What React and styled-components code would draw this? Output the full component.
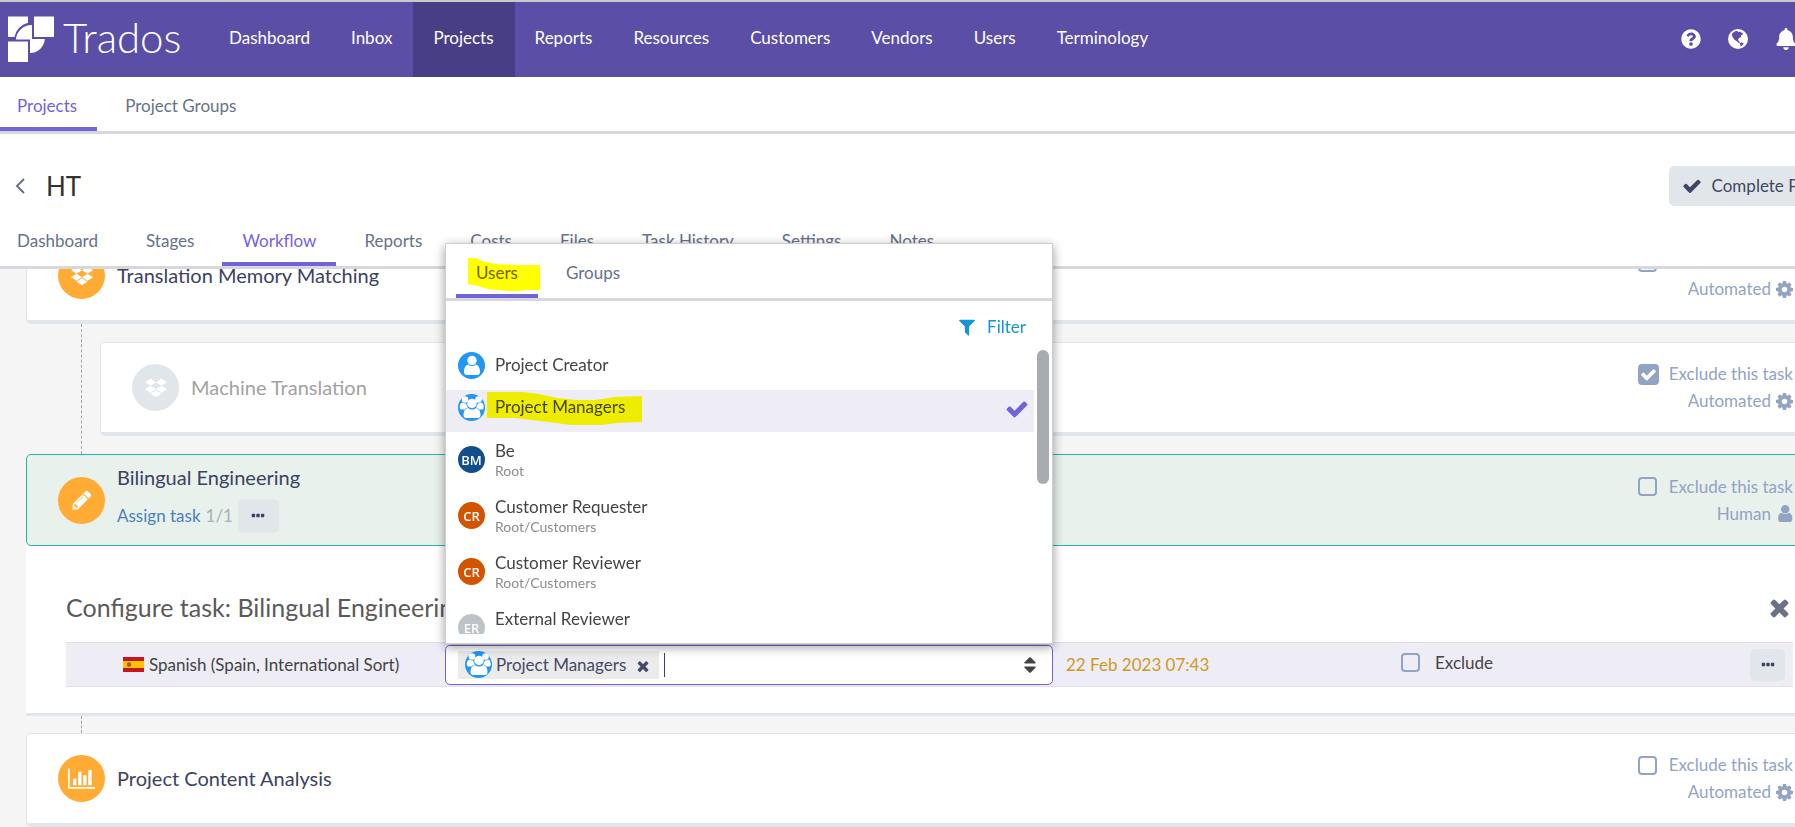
import React, { useState } from 'react';
import styled, { createGlobalStyle } from 'styled-components';
import { FaBell, FaDropbox, FaQuestionCircle } from 'react-icons/fa';

const GlobalStyle = createGlobalStyle`
    * {
        box-sizing: border-box;
    }

    body {
        margin: 0;
        background: #f5f5f5;
        color: #3c4260;
        font-family: Lato, Carlito, sans-serif;
        font-size: 17px;
        line-height: 24px;
    }

    h1, h2, h3, p, ul, ol {
        margin: 0;
        padding: 0;
        font-weight: 400;
        list-style: none;
    }

    a {
        color: inherit;
        text-decoration: none;
    }

    button, input {
        margin: 0;
        padding: 0;
        border: 0;
        background: none;
        color: inherit;
        font: inherit;
    }

    button {
        cursor: pointer;
    }
`;

const Page = styled.div`
    min-height: 100vh;
    overflow: hidden;
`;

/* the app is a little wider than the window and runs off its right edge */
const Wide = styled.div`
    width: calc(100% + 56px);
`;

const Glyph = styled.svg`
    display: block;
    flex: none;
    width: ${({ $size }) => $size}px;
    height: ${({ $size }) => $size}px;
    fill: currentColor;
`;

const paths = {
    check: 'M1671 566q0 40-28 68l-724 724-136 136q-28 28-68 28t-68-28l-136-136-362-362q-28-28-28-68t28-68l136-136q28-28 68-28t68 28l294 295 656-657q28-28 68-28t68 28l136 136q28 28 28 68z',
    times: 'M1490 1322q0 40-28 68l-136 136q-28 28-68 28t-68-28l-294-294-294 294q-28 28-68 28t-68-28l-136-136q-28-28-28-68t28-68l294-294-294-294q-28-28-28-68t28-68l136-136q28-28 68-28t68 28l294 294 294-294q28-28 68-28t68 28l136 136q28 28 28 68t-28 68l-294 294 294 294q28 28 28 68z',
    cog: 'M1152 896q0-106-75-181t-181-75-181 75-75 181 75 181 181 75 181-75 75-181zm512-109v222q0 12-8 23t-20 13l-185 28q-19 54-39 91 35 50 107 138 10 12 10 25t-9 23q-27 37-99 108t-94 71q-12 0-26-9l-138-108q-44 23-91 38-16 136-29 186-7 28-36 28h-222q-14 0-24.5-8.5t-11.5-21.5l-28-184q-49-16-90-37l-141 107q-10 9-25 9-14 0-25-11-126-114-165-168-7-10-7-23 0-12 8-23 15-21 51-66.5t54-70.5q-27-50-41-99l-183-27q-13-2-21-12.5t-8-23.5v-222q0-12 8-23t19-13l186-28q14-46 39-92-40-57-107-138-10-12-10-24 0-10 9-23 26-36 98.5-107.5t94.5-71.5q13 0 26 10l138 107q44-23 91-38 16-136 29-186 7-28 36-28h222q14 0 24.5 8.5t11.5 21.5l28 184q49 16 90 37l142-107q9-9 24-9 13 0 25 10 129 119 165 170 7 8 7 22 0 12-8 23-15 21-51 66.5t-54 70.5q26 50 41 98l183 28q13 2 21 12.5t8 23.5z',
    user: 'M1536 1399q0 109-62.5 187t-150.5 78h-854q-88 0-150.5-78t-62.5-187q0-85 8.5-160.5t31.5-152 58.5-131 94-89 134.5-34.5q131 128 313 128t313-128q76 0 134.5 34.5t94 89 58.5 131 31.5 152 8.5 160.5zm-256-887q0 159-112.5 271.5t-271.5 112.5-271.5-112.5-112.5-271.5 112.5-271.5 271.5-112.5 271.5 112.5 112.5 271.5z',
    pencil: 'M491 1536l91-91-235-235-91 91v107h128v128h107zm523-928q0-22-22-22-10 0-17 7l-542 542q-7 7-7 17 0 22 22 22 10 0 17-7l542-542q7-7 7-17zm-54-192l416 416-832 832h-416v-416zm683 96q0 53-37 90l-166 166-416-416 166-165q36-38 90-38 53 0 91 38l235 234q37 39 37 91z',
    filter: 'M1595 295q17 41-14 70l-493 493v742q0 42-39 59-13 5-25 5-27 0-45-19l-256-256q-19-19-19-45v-486l-493-493q-31-29-14-70 17-39 59-39h1280q42 0 59 39z',
    sort: 'M1408 1088q0 26-19 45l-448 448q-19 19-45 19t-45-19l-448-448q-19-19-19-45t19-45 45-19h896q26 0 45 19t19 45zm0-384q0 26-19 45t-45 19h-896q-26 0-45-19t-19-45 19-45l448-448q19-19 45-19t45 19l448 448q19 19 19 45z',
    dots: 'M576 736v192q0 40-28 68t-68 28h-192q-40 0-68-28t-28-68v-192q0-40 28-68t68-28h192q40 0 68 28t28 68zm512 0v192q0 40-28 68t-68 28h-192q-40 0-68-28t-28-68v-192q0-40 28-68t68-28h192q40 0 68 28t28 68zm512 0v192q0 40-28 68t-68 28h-192q-40 0-68-28t-28-68v-192q0-40 28-68t68-28h192q40 0 68 28t28 68z',
    chart: 'M640 896v512h-256v-512h256zm384-512v1024h-256v-1024h256zm1024 1152v128h-2048v-1536h128v1408h1920zm-640-896v768h-256v-768h256zm384-384v1152h-256v-1152h256z',
};

const viewBoxes = {
    chart: '0 0 2048 1792',
    cog: '128 128 1536 1536',
    user: '64 128 1536 1536',
};

const Icon = ({ name, size = 18 }) => (
    <Glyph viewBox={viewBoxes[name] || '0 0 1792 1792'} $size={size} aria-hidden="true">
        <path d={paths[name]} />
    </Glyph>
);

/* ---------- top bar ---------- */

const TopBar = styled(Wide)`
    display: flex;
    height: 77px;
    padding: 0 54px 0 8px;
    border-top: 2px solid #c9c9c9;
    background: #5a4ea6;
    color: #fff;
`;

const Brand = styled.a`
    display: flex;
    align-items: center;
    gap: 9px;
    width: 201px;
    padding-bottom: 1px;
    font-size: 42px;
    font-weight: 300;
    line-height: 44px;

    span {
        padding-bottom: 4px;
    }
`;

const NavLink = styled.a`
    display: flex;
    align-items: center;
    padding: 0 21px 3px 20px;
    background: ${({ $active }) => ($active ? '#473e85' : 'none')};
`;

const TopIcons = styled.div`
    display: flex;
    align-items: center;
    gap: 27px;
    margin-left: auto;
    padding-bottom: 1px;
`;

const Logo = () => (
    <svg width="46" height="46" viewBox="8 16 46 46" fill="#fff" aria-hidden="true">
        <path d="M8 16.500h20v6.200a18 18 0 0 0-13.500 14.300h-6.500z" />
        <path d="M34 16.500h20v20.500h-20z" />
        <path d="M8 41.500h20v20.500h-20z" />
        <path d="M16 39.500a16 15 0 0 1 16-14.500v14h12.800a15 15 0 0 1-14.800 14v-13.500z" />
    </svg>
);

const GlobeIcon = () => (
    <svg width="20" height="20" viewBox="0 0 20 20" aria-hidden="true">
        <circle cx="10" cy="10" r="10" fill="#fff" />
        <g fill="#5a4ea6">
            <path d="M4 4.500l3-2.200 2.500-.3 1 1.300 1.500-.8 1.200 1 1.800.8-.6 1.800-1.600.2.400 1.500-2 1.300-1.400 1.800 1.200 1.200 1 2-.8.5-2-2-2.500-1.500-2-3.200-.9-2z" />
            <path d="M12 14.200l1.800-.9 1.700.9-.7 1.900-2.200 1.400z" />
        </g>
    </svg>
);

/* ---------- tabs ---------- */

const TabBar = styled.nav`
    display: flex;
    gap: 8px;
    height: ${({ $height }) => $height}px;
    padding-left: ${({ $inset = 0 }) => $inset}px;
    border-bottom: 3px solid #d7d8dd;
    background: #fff;
`;

const Tab = styled.a`
    display: flex;
    align-items: flex-end;
    padding: 0 20px 9px;
    border-bottom: 4px solid ${({ $active }) => ($active ? '#7363db' : 'transparent')};
    color: ${({ $active }) => ($active ? '#7363db' : '#66718a')};
    white-space: nowrap;

    ${TabBar} > &:first-child {
        padding-left: ${({ $flush }) => ($flush ? 17 : 20)}px;
    }
`;

const ProjectHeader = styled.header`
    display: flex;
    align-items: center;
    justify-content: space-between;
    height: 88px;
    padding: 16px 0 0 14px;
    background: #fff;
`;

const TitleGroup = styled.div`
    display: flex;
    align-items: center;
    gap: 20px;
    color: #333;

    h1 {
        font-size: 26px;
        line-height: 32px;
    }
`;

const CompleteButton = styled.button`
    display: flex;
    align-items: center;
    gap: 10px;
    height: 40px;
    padding: 0 10px 0 13px;
    border-radius: 5px;
    background: #e1e6ea;
    color: #3f4763;
    white-space: nowrap;
`;

const Sticky = styled.div`
    position: relative;
    z-index: 1;
`;

/* ---------- workflow ---------- */

/* scrolled part of the way under the header */
const Workflow = styled(Wide)`
    margin-top: -39px;
    padding: 0 26px;
`;

const Card = styled.article`
    display: flex;
    align-items: center;
    gap: 12px;
    height: 94px;
    padding: 0 31px;
    border: 1px solid #e1e6ea;
    border-bottom-width: 4px;
    border-radius: 5px;
    background: #fff;

    ${({ $open }) => $open && `
        height: 92px;
        border: 1px solid #2bb3a8;
        background: #e8f1ec;
    `}
`;

const Connector = styled.div`
    min-height: 17px;
    margin-left: 55px;
    padding: ${({ $branch }) => ($branch ? '18px 0 18px 18px' : 0)};
    border-left: 1px dashed #a0a6b0;
`;

const Badge = styled.span`
    display: grid;
    place-items: center;
    flex: none;
    width: 47px;
    height: 47px;
    border-radius: 50%;
    background: ${({ $muted }) => ($muted ? '#e1e6ea' : '#ffab34')};
    color: #fff;
`;

const TaskInfo = styled.div`
    flex: 1;
    display: flex;
    flex-direction: column;
    gap: 10px;
    padding-bottom: 2px;

    h2 {
        color: ${({ $muted }) => ($muted ? '#a2a2a2' : '#3c4260')};
        font-size: 20px;
        line-height: 24px;
    }
`;

const AssignRow = styled.div`
    display: flex;
    align-items: center;
    gap: 5px;
    color: #a9b0ba;

    a {
        color: #4a7fc1;
    }
`;

const DotsButton = styled.button`
    display: grid;
    place-items: center;
    width: ${({ $small }) => ($small ? 35 : 41)}px;
    height: ${({ $small }) => ($small ? 32 : 34)}px;
    border-radius: 5px;
    background: #e1e6ea;
    color: #3c4260;
`;

const TaskMeta = styled.div`
    display: flex;
    flex-direction: column;
    align-items: flex-end;
    gap: 3px;
    color: #93a3c4;
`;

const MetaKind = styled.span`
    display: flex;
    align-items: center;
    gap: 5px;
`;

const CheckLabel = styled.label`
    display: flex;
    align-items: center;
    gap: ${({ $gap }) => $gap}px;
`;

const CheckBox = styled.span`
    display: grid;
    place-items: center;
    color: #fff;

    input, svg {
        grid-area: 1 / 1;
    }

    svg {
        pointer-events: none;
    }

    input {
        appearance: none;
        width: 19px;
        height: 19px;
        border: 2px solid #93a3c4;
        border-radius: 4px;
    }

    input:checked {
        width: 21px;
        height: 21px;
        background: #93a3c4;
    }
`;

const Check = ({ label, gap, initial = false }) => {
    const [checked, setChecked] = useState(initial);
    return (
        <CheckLabel $gap={gap}>
            <CheckBox>
                <input type="checkbox" checked={checked} onChange={() => setChecked(!checked)} />
                {checked && <Icon name="check" size={17} />}
            </CheckBox>
            {label}
        </CheckLabel>
    );
};

const Task = ({ title, icon, muted, open, kind = 'Automated', excluded, children }) => (
    <Card $open={open}>
        <Badge $muted={muted}>{icon}</Badge>
        <TaskInfo $muted={muted}>
            <h2>{title}</h2>
            {children}
        </TaskInfo>
        <TaskMeta>
            <Check label="Exclude this task" gap={excluded ? 10 : 12} initial={excluded} />
            <MetaKind>
                {kind}
                <Icon name={kind === 'Human' ? 'user' : 'cog'} size={17} />
            </MetaKind>
        </TaskMeta>
    </Card>
);

/* ---------- configure panel ---------- */

const Panel = styled.section`
    height: 170px;
    padding: 48px 32px 0 40px;
    border-bottom: 3px solid #e1e6ea;
    background: #fff;
`;

const PanelHead = styled.div`
    display: flex;
    justify-content: space-between;
    align-items: center;
    height: 48px;
    padding-bottom: 22px;
    color: #6b7186;

    h3 {
        color: #5a5a5a;
        font-size: 25px;
        line-height: 28px;
    }
`;

const ConfigRow = styled.div`
    display: grid;
    grid-template-columns: 379fr 608fr 348fr 392fr;
    align-items: center;
    height: 45px;
    border-top: 1px solid #e2dbe8;
    border-bottom: 1px solid #e6deee;
    background: #eeecf5;
    color: #444;
`;

const Language = styled.div`
    display: flex;
    align-items: center;
    gap: 5px;
    padding-left: 57px;
    white-space: nowrap;
`;

const Assignee = styled.div`
    position: relative;
`;

const ComboBox = styled.div`
    display: flex;
    align-items: center;
    gap: 5px;
    height: 40px;
    padding: 0 12px;
    border: 1px solid #7363db;
    border-radius: 5px;
    background: #fff;

    input {
        flex: 1;
        min-width: 0;
        outline: none;
    }
`;

const Caret = styled.span`
    width: 1px;
    height: 24px;
    background: #3c4260;
`;

const Tag = styled.span`
    display: flex;
    align-items: center;
    gap: 4px;
    height: 28px;
    padding: 0 8px 0 7px;
    background: #ebebeb;
    color: #444a66;
    white-space: nowrap;

    button {
        padding: 2px 0 0 5px;
    }
`;

const DueDate = styled.span`
    padding-left: 13px;
    color: #cf9a1c;
`;

const RowEnd = styled.div`
    display: flex;
    align-items: center;
    justify-content: space-between;
    padding-right: 8px;

    label {
        padding-bottom: 4px;
    }
`;

const Flag = () => (
    <svg width="21" height="15" viewBox="0 0 21 15" aria-hidden="true">
        <path fill="#c8141e" d="M0 0h21v15h-21z" />
        <path fill="#ffc400" d="M0 4h21v7h-21z" />
        <path fill="#ad5a1e" d="M4 6l2-1 2 1v3l-2 1-2-1z" />
    </svg>
);

/* ---------- user picker ---------- */

const Picker = styled.div`
    position: absolute;
    right: 0;
    bottom: 41px;
    left: 0;
    z-index: 2;
    height: 401px;
    border: 1px solid #cfcfcf;
    background: #fff;
    box-shadow: 0 3px 10px rgba(0, 0, 0, 0.4);
`;

const FilterRow = styled.div`
    display: flex;
    justify-content: flex-end;
    height: 47px;
    padding: 14px 26px 0 0;
    color: #1296d8;

    button {
        display: flex;
        align-items: center;
        gap: 10px;
        height: 24px;
    }
`;

const ListFrame = styled.div`
    display: flex;
    gap: 3px;
    height: 286px;
    padding-right: 3px;
`;

const UserList = styled.ul`
    flex: 1;
    overflow: hidden;
`;

const ScrollThumb = styled.div`
    width: 12px;
    height: 134px;
    margin-top: 2px;
    border-radius: 6px;
    background: #a8abb0;
`;

const UserRow = styled.li`
    display: flex;
    align-items: center;
    gap: 10px;
    height: ${({ $tall }) => ($tall ? 56 : 42)}px;
    padding: 0 5px ${({ $tall }) => ($tall ? 0 : 7)}px 12px;
    background: ${({ $selected }) => ($selected ? '#eeecf5' : 'none')};
    color: #444;
`;

const Selected = styled.span`
    margin-left: auto;
    padding-top: 4px;
    color: #7363db;
`;

const UserName = styled.span`
    display: flex;
    flex-direction: column;
    line-height: 22px;

    small {
        color: #8c8c8c;
        font-size: 14px;
        line-height: 18px;
    }
`;

const Initials = styled.span`
    display: grid;
    place-items: center;
    flex: none;
    width: 27px;
    height: 27px;
    border-radius: 50%;
    background: ${({ $color }) => $color};
    color: #fff;
    font-family: 'Open Sans', sans-serif;
    font-size: 13px;
    font-weight: 600;
`;

const Marked = styled.span`
    position: relative;

    > svg {
        position: absolute;
        top: -3px;
        left: -8px;
        fill: #ffff00;
        mix-blend-mode: multiply;
        pointer-events: none;
    }
`;

const PersonIcon = () => (
    <svg width="27" height="27" viewBox="0 0 27 27" aria-hidden="true">
        <circle cx="13.500" cy="13.500" r="13.500" fill="#2196f3" />
        <g fill="#fff">
            <circle cx="14" cy="8.500" r="4.700" />
            <path d="M6 20c0-4 1.500-7 4.500-7.500 2 2 5 2 7 0 3 .5 4.500 3.500 4.500 7.500 0 2-1 3-2.500 3h-11c-1.500 0-2.500-1-2.500-3z" />
        </g>
    </svg>
);

const GroupIcon = () => (
    <svg width="27" height="27" viewBox="0 0 27 27" aria-hidden="true">
        <circle cx="13.500" cy="13.500" r="13.500" fill="#2196f3" />
        <g fill="#fff">
            <circle cx="7" cy="5.500" r="3.300" />
            <circle cx="20.500" cy="5.500" r="3.300" />
            <circle cx="14" cy="9.500" r="4.700" />
            <path d="M2 14.500c-.8-3 .5-5.500 2.500-6 1.200 1 2.500 1.200 3.800 1 .2 1.800.9 3 1.900 4-1.700.1-2.700.7-3.500 2h-3c-1 0-1.500-.3-1.700-1z" />
            <path d="M25.500 14.500c.8-3-.5-5.500-2.500-6-1.200 1-2.500 1.200-3.300 1-.2 1.800-.9 3-1.900 4 1.700.1 2.700.7 3.500 2h2.500c1 0 1.500-.3 1.700-1z" />
            <path d="M5.500 21c0-4 1.500-6.500 4.500-7 2.500 2 5.500 2 8 0 3 .5 4.500 3 4.500 7 0 2-1 3-2.500 3h-12c-1.500 0-2.500-1-2.500-3z" />
        </g>
    </svg>
);

const users = [
    { initials: 'BM', color: '#124e8c', name: 'Be', group: 'Root' },
    { initials: 'CR', color: '#d35400', name: 'Customer Requester', group: 'Root/Customers' },
    { initials: 'CR', color: '#d35400', name: 'Customer Reviewer', group: 'Root/Customers' },
    { initials: 'ER', color: '#bdc3c7', name: 'External Reviewer', group: 'Root/Vendors' },
];

const UserPicker = () => (
    <Picker>
        <TabBar $height={57} $inset={10}>
            <Tab href="#users" $active>
                <Marked>
                    Users
                    <svg width="72" height="34" viewBox="0 0 72 34" aria-hidden="true">
                        <path d="M0 0h8l6 3 14 3 16 1h28v25h-14l-6 1h-12l-20-2-10-3-10-2z" />
                    </svg>
                </Marked>
            </Tab>
            <Tab href="#groups">Groups</Tab>
        </TabBar>
        <FilterRow>
            <button type="button"><Icon name="filter" size={20} />Filter</button>
        </FilterRow>
        <ListFrame>
            <UserList>
                <UserRow>
                    <PersonIcon />
                    Project Creator
                </UserRow>
                <UserRow $selected>
                    <GroupIcon />
                    <Marked>
                        Project Managers
                        <svg width="155" height="34" viewBox="0 0 155 34" aria-hidden="true">
                            <path d="M0 0h36l16 2 18 4 20 2h18l20-3 27-1v26l-25 1-16 2h-30l-22-3-34-4h-28z" />
                        </svg>
                    </Marked>
                    <Selected><Icon name="check" size={24} /></Selected>
                </UserRow>
                {users.map(({ initials, color, name, group }) => (
                    <UserRow key={name} $tall>
                        <Initials $color={color}>{initials}</Initials>
                        <UserName>{name}<small>{group}</small></UserName>
                    </UserRow>
                ))}
            </UserList>
            <ScrollThumb />
        </ListFrame>
    </Picker>
);

const mainNav = ['Dashboard', 'Inbox', 'Projects', 'Reports', 'Resources', 'Customers', 'Vendors', 'Users', 'Terminology'];
const projectTabs = ['Dashboard', 'Stages', 'Workflow', 'Reports', 'Costs', 'Files', 'Task History', 'Settings', 'Notes'];

const App = () => (
    <Page>
        <GlobalStyle />
        <Sticky>
            <TopBar as="header">
                <Brand href="#home"><Logo /><span>Trados</span></Brand>
                {mainNav.map((item) => (
                    <NavLink key={item} href="#nav" $active={item === 'Projects'}>{item}</NavLink>
                ))}
                <TopIcons>
                    <FaQuestionCircle size={20} />
                    <GlobeIcon />
                    <FaBell size={22} />
                </TopIcons>
            </TopBar>
            <TabBar $height={57}>
                <Tab href="#projects" $active $flush>Projects</Tab>
                <Tab href="#groups">Project Groups</Tab>
            </TabBar>
            <Wide>
                <ProjectHeader>
                    <TitleGroup>
                        <svg width="12" height="16" viewBox="0 0 12 16" fill="none" stroke="#66718a" strokeWidth="2" aria-hidden="true">
                            <path d="M10 1l-7 7 7 7" />
                        </svg>
                        <h1>HT</h1>
                    </TitleGroup>
                    <CompleteButton type="button"><Icon name="check" size={20} />Complete Project</CompleteButton>
                </ProjectHeader>
            </Wide>
            <TabBar $height={47}>
                {projectTabs.map((item) => (
                    <Tab key={item} href="#tab" $active={item === 'Workflow'} $flush>{item}</Tab>
                ))}
            </TabBar>
        </Sticky>
        <Workflow as="main">
            <Task title="Translation Memory Matching" icon={<FaDropbox size={22} />} />
            <Connector $branch>
                <Task title="Machine Translation" icon={<FaDropbox size={22} />} muted excluded />
            </Connector>
            <Task title="Bilingual Engineering" icon={<Icon name="pencil" size={22} />} kind="Human" open>
                <AssignRow>
                    <a href="#assign">Assign task</a>
                    1/1
                    <DotsButton type="button" aria-label="More assignees"><Icon name="dots" size={16} /></DotsButton>
                </AssignRow>
            </Task>
            <Panel>
                <PanelHead>
                    <h3>Configure task: Bilingual Engineering</h3>
                    <button type="button" aria-label="Close"><Icon name="times" size={27} /></button>
                </PanelHead>
                <ConfigRow>
                    <Language><Flag />Spanish (Spain, International Sort)</Language>
                    <Assignee>
                        <ComboBox>
                            <Tag>
                                <GroupIcon />
                                Project Managers
                                <button type="button" aria-label="Remove"><Icon name="times" size={16} /></button>
                            </Tag>
                            <Caret />
                            <input type="text" aria-label="Assignees" />
                            <Icon name="sort" size={20} />
                        </ComboBox>
                        <UserPicker />
                    </Assignee>
                    <DueDate>22 Feb 2023 07:43</DueDate>
                    <RowEnd>
                        <Check label="Exclude" gap={15} />
                        <DotsButton type="button" $small aria-label="More actions"><Icon name="dots" size={16} /></DotsButton>
                    </RowEnd>
                </ConfigRow>
            </Panel>
            <Connector />
            <Task title="Project Content Analysis" icon={<Icon name="chart" size={27} />} />
        </Workflow>
    </Page>
);

export default App;
